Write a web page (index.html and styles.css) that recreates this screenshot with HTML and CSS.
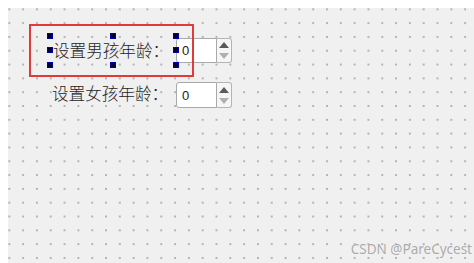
FILE: index.html
```html
<!DOCTYPE html>
<html lang="zh">
<head>
<meta charset="utf-8">
<link rel="stylesheet" href="styles.css">
</head>
<body>
<div class="canvas">
  <div class="row row1">
    <div class="label">设置男孩年龄：</div>
    <div class="spin">
      <div class="field">0</div>
      <div class="btns"><span class="up"></span><span class="down"></span></div>
    </div>
  </div>
  <div class="row row2">
    <div class="label">设置女孩年龄：</div>
    <div class="spin">
      <div class="field">0</div>
      <div class="btns"><span class="up"></span><span class="down"></span></div>
    </div>
  </div>
  <div class="select"></div>
  <div class="h h1"></div><div class="h h2"></div><div class="h h3"></div>
  <div class="h h4"></div><div class="h h5"></div>
  <div class="h h6"></div><div class="h h7"></div><div class="h h8"></div>
  <div class="mark">CSDN @PareCycest</div>
</div>
</body>
</html>
```
FILE: styles.css
```css
html, body { margin: 0; padding: 0; background: #fff; }
body { width: 474px; height: 263px; overflow: hidden; font-family: "Noto Sans CJK SC", "Noto Sans", sans-serif; }
.canvas {
  position: relative;
  margin: 8px 0 0 8px;
  height: 255px;
  box-sizing: border-box;
  padding: 28px 0 0 42px;
  background-color: #f0f0f0;
  background-image: radial-gradient(circle, #b4b4b4 0.7px, transparent 1.1px);
  background-size: 13.82px 13.82px;
  background-position: -5.6px -5.6px;
}
.row { display: flex; height: 29px; }
.row1 { align-items: center; }
.row2 { margin-top: 14px; align-items: flex-end; }
.label {
  width: 126px; box-sizing: border-box; padding-left: 3px;
  font-size: 16.6px; color: #1e1e1e; line-height: 29px; align-self: center;
  font-weight: 300; white-space: nowrap;
}
.row2 .label { padding-left: 2px; }
.spin { display: flex; width: 56px; height: 26px; }
.row1 .spin { height: 25px; }
.field {
  width: 41px; box-sizing: border-box; border: 1px solid #a9a9a9; border-radius: 3px 0 0 3px;
  background: #fff; font-family: "Liberation Sans", sans-serif; font-size: 13px; color: #222;
  display: flex; align-items: center; padding-left: 5px;
}
.btns {
  width: 15px; box-sizing: border-box; border: 1px solid #b4b4b4; border-left: none; border-radius: 0 3px 3px 0;
  background: #f6f6f6; display: flex; flex-direction: column; align-items: center; justify-content: center; gap: 5px;
}
.up { width: 0; height: 0; border-left: 5px solid transparent; border-right: 5px solid transparent; border-bottom: 6px solid #5a5a5a; }
.down { width: 0; height: 0; border-left: 5px solid transparent; border-right: 5px solid transparent; border-top: 6px solid #b0b0b0; }
.select {
  position: absolute; left: 21px; top: 16px; width: 165px; height: 53px;
  box-sizing: border-box; border: 2px solid #e03a3a;
}
.h { position: absolute; width: 6px; height: 6px; box-sizing: border-box; background: #000030; border: 1px solid #0000a8; }
.h1 { left: 39px; top: 25px; } .h2 { left: 102px; top: 25px; } .h3 { left: 165px; top: 25px; }
.h4 { left: 39px; top: 39px; } .h5 { left: 165px; top: 39px; }
.h6 { left: 39px; top: 54px; } .h7 { left: 102px; top: 54px; } .h8 { left: 165px; top: 54px; }
.mark {
  position: absolute; right: 2px; top: 232px;
  font-family: "Noto Sans", sans-serif; font-size: 13.5px; color: #a9a9a9;
  text-shadow: 0 0 1px #fff;
}
```
